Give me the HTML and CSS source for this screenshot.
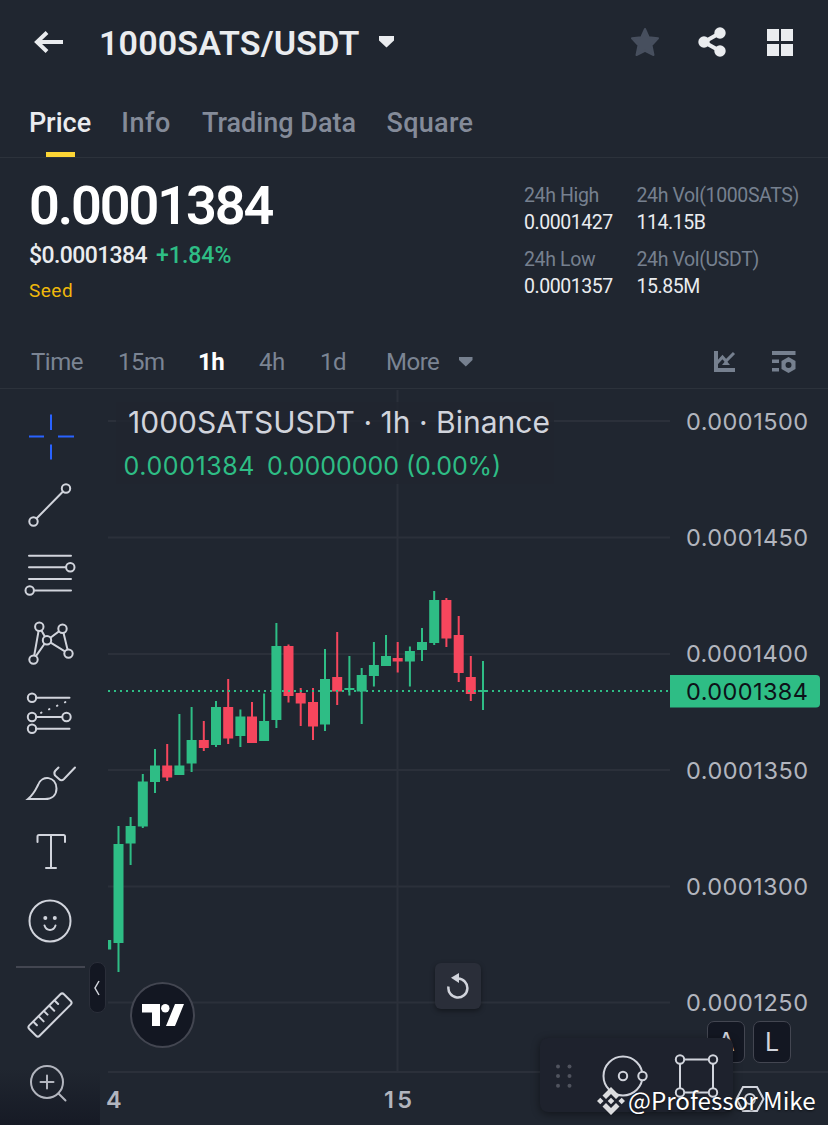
FILE: index.html
```
<!DOCTYPE html>
<html lang="en">
<head>
    <meta charset="utf-8">
    <title>1000SATS/USDT</title>
    <link rel="stylesheet" href="styles.css">
</head>
<body>
    <header class="header">
        <svg class="back" width="30" height="24" viewBox="0 0 30 24"><path d="M29 12H4M13 2.500L3 12L13 21.500"/></svg>
        <h1 class="pair">1000SATS/USDT</h1>
        <svg class="caret" width="16" height="12" viewBox="0 0 16 12"><path d="M0 0H15V4.500L7.500 11.500L0 4.500Z"/></svg>
        <div class="actions">
            <svg width="30" height="30" viewBox="0 0 30 30"><path class="star" d="M15 2L18.700 10.200L28 11.200L21.500 18.300L23.500 28L15 23.800L6.500 28L8.500 18.300L2 11.200L11.300 10.200Z"/></svg>
            <svg width="30" height="30" viewBox="0 0 30 30"><path class="share-line" d="M23 6L7 15L23 24"/><circle cx="23" cy="6" r="5.700"/><circle cx="7" cy="15" r="5.700"/><circle cx="23" cy="24" r="5.700"/></svg>
            <svg class="apps" width="26" height="27" viewBox="0 0 26 27"><path d="M0 0H12V12H0ZM14 0H26V12H14ZM0 15H12V27H0ZM14 15H26V27H14Z"/></svg>
        </div>
    </header>

    <nav class="tabs">
        <a class="tab active">Price</a>
        <a class="tab info">Info</a>
        <a class="tab trading">Trading Data</a>
        <a class="tab square">Square</a>
    </nav>

    <section class="ticker">
        <div class="last">
            <div class="price">0.0001384</div>
            <div class="fiat"><span class="usd">$0.0001384</span><span class="change">+1.84%</span></div>
            <div class="tag">Seed</div>
        </div>
        <dl class="stats">
            <div><dt>24h High</dt><dd>0.0001427</dd></div>
            <div><dt>24h Vol(1000SATS)</dt><dd>114.15B</dd></div>
            <div><dt>24h Low</dt><dd>0.0001357</dd></div>
            <div><dt>24h Vol(USDT)</dt><dd>15.85M</dd></div>
        </dl>
    </section>

    <div class="intervals">
        <span class="time">Time</span>
        <span class="m15">15m</span>
        <span class="h1 on">1h</span>
        <span class="h4">4h</span>
        <span class="d1">1d</span>
        <span class="more">More</span>
        <svg class="more-caret" width="14" height="10" viewBox="0 0 14 10"><path d="M0 0H13.500V3L6.800 9.500L0 3Z"/></svg>
        <svg class="ind" width="22" height="22" viewBox="0 0 22 22"><path d="M0 0H4V17H21V21H0Z"/><path class="ind-line" d="M3 12L8.500 6L12 10L20 2"/><path d="M12 9L16 14H8Z"/></svg>
        <svg class="set" width="24" height="24" viewBox="0 0 24 24"><path d="M0 1H23.500V5H0ZM0 9.500H7V13H0ZM0 18H7V21.500H0Z"/><path fill-rule="evenodd" d="M16.500 7L23.500 11V19L16.500 23L9.500 19V11ZM16.500 12A3 3 0 1 0 16.500 18A3 3 0 1 0 16.500 12Z"/></svg>
    </div>

    <main class="chart">
        <aside class="tools">
            <svg class="cross" viewBox="0 0 56 56"><path d="M29 5.500V21M29 35.500V50.500M7 27.400H22M36 27.400H52"/></svg>
            <svg viewBox="0 0 56 56"><path d="M14.500 40.500L41 13.500"/><circle cx="44" cy="10.500" r="4.200"/><circle cx="11.500" cy="43.500" r="4.200"/></svg>
            <svg viewBox="0 0 56 56"><path d="M7 8.700H49M7 20.300H44M7 32H49M12 43.500H49"/><circle cx="48.300" cy="20.300" r="4.200"/><circle cx="7.700" cy="43.500" r="4.200"/></svg>
            <svg viewBox="0 0 56 56"><path d="M17.300 10.800L25 24.300L40.500 12.800L46.500 37.600L25 24.300L11.500 43.600Z"/><g class="knob"><circle cx="17.300" cy="10.800" r="4.200"/><circle cx="40.500" cy="12.800" r="4.200"/><circle cx="25" cy="24.300" r="4.200"/><circle cx="11.500" cy="43.600" r="4.200"/><circle cx="46.500" cy="37.600" r="4.200"/></g></svg>
            <svg viewBox="0 0 56 56"><path d="M14 12.800H47.500M14 32H40M14 43.800H47.500"/><path stroke-dasharray=".5 8.200" d="M19 27.800L45 16.400"/><circle cx="10" cy="12.800" r="4.200"/><circle cx="10" cy="32" r="4.200"/><circle cx="44.500" cy="32" r="4.200"/><circle cx="10" cy="43.800" r="4.200"/></svg>
            <svg viewBox="0 0 56 56"><path d="M6 44C12 39 13.500 35 16 30C20 19.500 34 21 34.500 33.500C34.500 40 30 44 23 44ZM36.500 12.500L33.500 15.500Q31.500 17.500 33 20.500L37 24Q39.500 26.500 42 24L53 12.500"/></svg>
            <svg viewBox="0 0 56 56"><path d="M15.500 18V12.500Q15.500 11 17 11H41.500Q43 11 43 12.500V18M29 11V44M24 44H34"/></svg>
            <svg viewBox="0 0 56 56"><circle cx="28" cy="28" r="20.500"/><path d="M22.500 32.500Q24 37 28 37T33.500 32.500"/><circle class="eye" cx="23.300" cy="25" r="2"/><circle class="eye" cx="32.800" cy="25" r="2"/></svg>
            <hr>
            <svg viewBox="0 0 56 56"><g transform="rotate(-45 28 28)"><rect x="3.500" y="20.700" width="49" height="14.600" rx="2.500"/><path d="M11.500 21V26M19 21V28M26.500 21V26M34 21V28M41.500 21V26"/></g></svg>
            <svg class="zoom" viewBox="0 0 56 56"><circle cx="25" cy="26" r="16"/><path d="M25 19.500V32.500M18.500 26H31.500M36.500 37.500L43.500 44.500"/></svg>
        </aside>

        <div class="plot">
            <svg id="canvas" width="728" height="736" viewBox="100 389 728 736">
                <g class="grid">
                    <path d="M108 421H670M108 537.500H670M108 654H670M108 770H670M108 886.500H670M108 1002.500H670M108 1072H828M397.500 390V1072"/>
                </g>
                <g id="candles"></g>
                <path class="last-line" d="M108 691H670"/>
                <path class="last-tag" d="M670 675H816Q820 675 820 679V703.500Q820 707.500 816 707.500H670Z"/>
                <g class="scale">
                    <text x="686" y="429.500" textLength="122">0.0001500</text>
                    <text x="686" y="545.500" textLength="122">0.0001450</text>
                    <text x="686" y="662" textLength="122">0.0001400</text>
                    <text class="last-text" x="686" y="699.500" textLength="122">0.0001384</text>
                    <text x="686" y="778.500" textLength="122">0.0001350</text>
                    <text x="686" y="895" textLength="122">0.0001300</text>
                    <text x="686" y="1011" textLength="122">0.0001250</text>
                    <text class="day" x="106" y="1108">4</text>
                    <text class="day" x="384" y="1108" textLength="28">15</text>
                </g>
                <g class="legend">
                    <rect x="116" y="402" width="438" height="82"/>
                    <text class="symbol" x="128" y="433" textLength="422">1000SATSUSDT · 1h · Binance</text>
                    <text class="value" x="123.500" y="474.500" textLength="131">0.0001384</text>
                    <text class="value" x="267" y="474.500" textLength="132">0.0000000</text>
                    <text class="value" x="406" y="474.500" textLength="95">(0.00%)</text>
                </g>
            </svg>

            <div class="collapse"><svg width="8" height="16" viewBox="0 0 8 16"><path d="M6 1L2 8L6 15"/></svg></div>
            <div class="tv"><svg width="42" height="22" viewBox="0 0 42 22"><path d="M0 0H18V22H10V8.500H0ZM33 0H42L33 22H24Z"/><circle cx="23.300" cy="4.200" r="4.200"/></svg></div>
            <div class="reset"><svg width="24" height="26" viewBox="0 0 24 26"><path class="arc" d="M2.500 13.500A9.500 9.500 0 1 0 12 5.500"/><path class="tip" d="M13 0V10L5 4.800Z"/></svg></div>
            <div class="key auto">A</div>
            <div class="key log">L</div>
            <svg class="axis-set" width="30" height="28" viewBox="0 0 30 28"><path d="M8 2H22L28.500 14L22 26H8L1.500 14Z"/><circle cx="15" cy="14" r="5"/></svg>
            <div class="favorites">
                <svg width="193" height="74" viewBox="540 1038 193 74">
                    <g class="dots"><circle cx="558" cy="1066.500" r="2"/><circle cx="569.500" cy="1066.500" r="2"/><circle cx="558" cy="1076" r="2"/><circle cx="569.500" cy="1076" r="2"/><circle cx="558" cy="1085.700" r="2"/><circle cx="569.500" cy="1085.700" r="2"/></g>
                    <circle cx="623" cy="1076" r="19.500"/><circle cx="623" cy="1076" r="4.200"/><circle class="knob" cx="642.500" cy="1076" r="4.200"/>
                    <rect x="680" y="1059.500" width="33" height="33"/>
                    <g class="knob"><circle cx="680" cy="1059.500" r="4.200"/><circle cx="713" cy="1059.500" r="4.200"/><circle cx="680" cy="1092.500" r="4.200"/><circle cx="713" cy="1092.500" r="4.200"/></g>
                </svg>
            </div>
            <div class="author">
                <svg width="28" height="28" viewBox="0 0 28 28"><path d="M14 0L22.500 8.500L19 12L14 7L9 12L5.500 8.500ZM3.300 10.700L6.600 14L3.300 17.300L0 14ZM14 10.700L17.300 14L14 17.300L10.700 14ZM24.700 10.700L28 14L24.700 17.300L21.400 14ZM5.500 19.500L9 16L14 21L19 16L22.500 19.500L14 28Z"/></svg>
                <span>@Professor Mike</span>
            </div>
        </div>
    </main>

    <script type="text/javascript">
        // x, body top, body bottom, high, low, up
        var data = [
            [118.5, 844, 943, 826, 972, 1], [130.6, 826, 843.5, 817, 865, 1],
            [142.8, 781.5, 826.5, 774, 828, 1], [155, 765.5, 782, 749, 793, 1],
            [167.2, 765.5, 777.5, 744, 781, 0], [179.4, 765.5, 775, 714, 775, 1],
            [191.6, 740, 763.5, 707, 772, 1], [203.8, 740, 748, 721, 751, 0],
            [216, 707, 745, 701, 747, 1], [228.2, 707, 738.5, 679, 744, 0],
            [240.4, 716.5, 736, 709.5, 747, 1], [252, 716.5, 743, 702, 743, 0],
            [264.1, 721, 741, 693.5, 741, 1], [276.4, 646, 720, 623, 728, 1],
            [288.5, 646, 696, 644.5, 702.5, 0], [300.7, 693, 703.5, 688, 726, 0],
            [313, 702, 726.5, 688, 740, 0], [325, 679, 724.5, 649, 731, 1],
            [337.2, 677, 691.5, 632, 705, 0], [349.4, 688, 690, 656, 695.5, 1],
            [361.7, 675, 691.5, 668, 724, 1], [373.9, 665, 676, 642, 686.5, 1],
            [386, 656, 666, 635, 666, 1], [397.7, 658, 661.5, 642, 672.5, 0],
            [409.9, 651, 661.5, 646.5, 686.5, 1], [422, 642, 650, 628, 661, 1],
            [434.2, 600, 643, 591, 645, 1], [446.4, 600, 638.5, 598, 647, 0],
            [458.7, 635, 673, 616, 682, 0], [470.8, 677, 694, 656, 701, 0],
            [483, 690, 692, 661, 710, 1]
        ];
        // the first candle is cut by the left edge
        var html = '<rect class="up" x="108" y="940" width="3.2" height="9.500"/>';
        for (var i = 0; i < data.length; i++) {
            var d = data[i];
            var cls = d[5] ? 'up' : 'down';
            html += '<rect class="' + cls + '" x="' + (d[0] - 1) + '" y="' + d[3] + '" width="2" height="' + (d[4] - d[3]) + '"/>';
            html += '<rect class="' + cls + '" x="' + (d[0] - 5) + '" y="' + d[1] + '" width="10" height="' + (d[2] - d[1]) + '"/>';
        }
        document.getElementById('candles').innerHTML = html;
    </script>
</body>
</html>
```
FILE: styles.css
```
* {
    box-sizing: border-box;
}
body {
    margin: 0;
    width: 828px;
    height: 1125px;
    overflow: hidden;
    background: #202630;
    color: #eaecef;
    font-family: Roboto, "Liberation Sans", sans-serif;
}
svg {
    display: block;
    flex: none;
}

/* header */
.header {
    display: flex;
    align-items: center;
    height: 84px;
    padding: 0 35px 0 34px;
    fill: #eaecef;
}
.back {
    fill: none;
    stroke: #eaecef;
    stroke-width: 4;
}
.pair {
    width: 258px;
    margin: 2px 0 0 35px;
    font-size: 34px;
    line-height: 40px;
    font-weight: 600;
    letter-spacing: .15px;
    white-space: nowrap;
}
.caret {
    margin-left: 22px;
}
.actions {
    display: flex;
    align-items: center;
    gap: 37px;
    margin-left: auto;
}
.apps {
    margin-left: 3px;
}
.star {
    fill: #474f5e;
    stroke: #474f5e;
    stroke-width: 2;
    stroke-linejoin: round;
}
.share-line {
    fill: none;
    stroke: #eaecef;
    stroke-width: 4;
}

/* tabs */
.tabs {
    display: flex;
    gap: 30px;
    height: 74px;
    padding-left: 29.500px;
    border-bottom: 1px solid #2c323b;
    font-size: 27px;
    font-weight: 500;
    line-height: 78px;
    color: #848b99;
    white-space: nowrap;
}
.tab {
    display: flex;
    flex-direction: column;
    align-items: center;
    height: 73px;
}
.active {
    width: 61px;
    color: #eaecef;
}
.active::after {
    content: "";
    flex: none;
    width: 29px;
    height: 5px;
    margin-top: -10px;
    background: #fcd535;
}
.info {
    width: 51px;
    letter-spacing: .5px;
}
.trading {
    width: 155px;
}
.square {
    letter-spacing: .3px;
}

/* ticker */
.ticker {
    display: flex;
    height: 176px;
    padding: 20px 0 0 30px;
}
.last {
    width: 494px;
}
.price {
    height: 54px;
    margin-left: -1px;
    font-size: 54px;
    line-height: 56px;
    font-weight: 600;
    letter-spacing: -2.100px;
    color: #fff;
}
.fiat {
    display: flex;
    gap: 9px;
    margin: 8px 0 0 -1px;
    font-size: 23px;
    line-height: 32px;
    font-weight: 500;
}
.usd {
    letter-spacing: -.600px;
}
.change {
    color: #2ebd85;
}
.tag {
    margin: 6px 0 0 -1px;
    font-size: 19px;
    line-height: 26px;
    letter-spacing: .5px;
    color: #f0b90b;
}
.stats {
    display: grid;
    grid-template-columns: 88px 170px;
    gap: 9.500px 24.500px;
    align-content: start;
    margin: 4px 0 0;
    font-size: 19.500px;
    line-height: 27px;
    white-space: nowrap;
}
.stats dt {
    letter-spacing: -.370px;
    color: #76808f;
}
.stats dd {
    margin: 0;
    letter-spacing: -.450px;
}

/* intervals */
.intervals {
    display: flex;
    align-items: center;
    height: 55px;
    padding: 1px 32px 0 31px;
    border-bottom: 1px solid #2c323b;
    font-size: 24px;
    letter-spacing: -.500px;
    color: #7b8493;
    fill: #76808f;
}
.time {
    width: 87px;
}
.m15 {
    width: 80px;
}
.h1 {
    width: 61px;
}
.h4 {
    width: 61px;
}
.d1 {
    width: 66px;
}
.more {
    width: 73px;
}
.on {
    font-weight: 700;
    color: #fff;
}
.ind {
    margin-left: auto;
}
.ind-line {
    fill: none;
    stroke: #76808f;
    stroke-width: 3;
}
.set {
    margin-left: 36px;
}

/* chart */
.chart {
    display: flex;
    height: 736px;
}
.tools {
    width: 100px;
    padding-top: 13px;
    background: linear-gradient(transparent 680px, #161a25 736px);
}
.tools svg {
    width: 56px;
    height: 56px;
    margin: 6.600px 0 13.200px 22px;
    fill: none;
    stroke: #d1d4dc;
    stroke-width: 2;
    stroke-linecap: round;
}
.tools .cross {
    stroke: #2962ff;
    stroke-linecap: butt;
}
.tools .zoom {
    stroke: #b2b5be;
}
.tools .eye {
    fill: #d1d4dc;
    stroke: none;
}
.tools .knob {
    fill: #202630;
}
.tools hr {
    width: 69px;
    height: 2px;
    margin: 17.500px 0 18.500px 16px;
    border: 0;
    background: #434651;
}
.plot {
    position: relative;
    width: 728px;
}
.grid {
    fill: none;
    stroke: #2b303a;
    stroke-width: 2;
}
.up {
    fill: #2ebd85;
}
.down {
    fill: #f6465d;
}
.last-line {
    stroke: #2ebd85;
    stroke-width: 2;
    stroke-dasharray: 2 4;
}
.last-tag {
    fill: #2ebd85;
}
.scale, .legend {
    font-family: Inter, "Liberation Sans", sans-serif;
    font-size: 23.500px;
    fill: #b2b5be;
}
.scale .last-text {
    fill: #0d1218;
}
.scale .day {
    font-weight: 600;
}
.legend rect {
    fill: #202630;
    fill-opacity: .8;
}
.legend .symbol {
    font-size: 30px;
    fill: #d1d4dc;
}
.legend .value {
    font-size: 25px;
    fill: #2ebd85;
}

/* floating controls over the chart */
.collapse, .tv, .reset, .key, .favorites, .axis-set, .author {
    position: absolute;
    display: flex;
    align-items: center;
    justify-content: center;
}
.collapse {
    left: -11px;
    top: 573px;
    width: 17px;
    height: 51px;
    border: 1px solid #2a2e39;
    border-radius: 8px;
    background: #131722;
    fill: none;
    stroke: #d1d4dc;
    stroke-width: 1.500;
}
.collapse svg {
    margin-left: -2px;
}
.tv {
    left: 30px;
    top: 593px;
    width: 65px;
    height: 66px;
    border: 2px solid #434651;
    border-radius: 50%;
    background: #131722;
    fill: #fff;
}
.reset {
    left: 335px;
    top: 574px;
    width: 46px;
    height: 46px;
    border-radius: 6px;
    background: #2a2e39;
    box-shadow: 0 2px 5px rgba(0, 0, 0, .4);
}
.arc {
    fill: none;
    stroke: #d1d4dc;
    stroke-width: 2.500;
}
.tip {
    fill: #d1d4dc;
}
.key {
    top: 632px;
    width: 38px;
    height: 42px;
    border: 1.500px solid #434651;
    border-radius: 7px;
    background: #131722;
    font-family: Inter, sans-serif;
    font-size: 25px;
    color: #d1d4dc;
}
.auto {
    left: 607px;
}
.log {
    left: 653px;
}
.axis-set {
    left: 635px;
    top: 696px;
    fill: none;
    stroke: #d1d4dc;
    stroke-width: 2;
}
.favorites {
    left: 440px;
    top: 649px;
    width: 193px;
    height: 74px;
    border-radius: 8px;
    background: #1e222d;
    box-shadow: 0 2px 8px rgba(0, 0, 0, .45);
    fill: none;
    stroke: #d1d4dc;
    stroke-width: 2;
}
.favorites .knob {
    fill: #1e222d;
}
.dots {
    fill: #50535e;
    stroke: none;
}
.author {
    left: 497px;
    top: 694px;
    gap: 3px;
    height: 36px;
    font-family: "Noto Sans CJK SC", sans-serif;
    font-size: 24.200px;
    font-weight: 400;
    line-height: 34px;
    color: #fff;
    fill: #dcdddf;
    text-shadow: 0 1px 2px rgba(0, 0, 0, .6);
    white-space: nowrap;
}
.author span {
    margin-top: -2px;
}
```
